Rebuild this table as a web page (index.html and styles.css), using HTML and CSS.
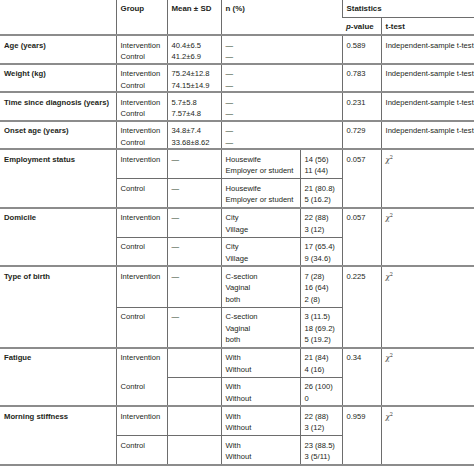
FILE: index.html
```html
<!DOCTYPE html>
<html>
<head>
<meta charset="utf-8">
<link rel="stylesheet" href="styles.css">
</head>
<body>
<div class="wrap">
<table class="tbl">
<colgroup>
<col class="c1"><col class="c2"><col class="c3"><col class="c4a"><col class="c4b"><col class="c5"><col class="c6">
</colgroup>
<thead>
<tr class="h1">
<th rowspan="2" class="first"></th>
<th rowspan="2">Group</th>
<th rowspan="2">Mean ± SD</th>
<th rowspan="2" colspan="2">n (%)</th>
<th colspan="2" class="stat">Statistics</th>
</tr>
<tr class="h2">
<th><i>p</i>-value</th>
<th>t-test</th>
</tr>
</thead>
<tbody>
<tr class="main">
<td class="lbl">Age (years)</td>
<td>Intervention<br>Control</td>
<td>40.4±6.5<br>41.2±6.9</td>
<td colspan="2">—<br>—</td>
<td>0.589</td>
<td>Independent-sample t-test</td>
</tr>
<tr class="main">
<td class="lbl">Weight (kg)</td>
<td>Intervention<br>Control</td>
<td>75.24±12.8<br>74.15±14.9</td>
<td colspan="2">—<br>—</td>
<td>0.783</td>
<td>Independent-sample t-test</td>
</tr>
<tr class="main">
<td class="lbl">Time since diagnosis (years)</td>
<td>Intervention<br>Control</td>
<td>5.7±5.8<br>7.57±4.8</td>
<td colspan="2">—<br>—</td>
<td>0.231</td>
<td>Independent-sample t-test</td>
</tr>
<tr class="main">
<td class="lbl">Onset age (years)</td>
<td>Intervention<br>Control</td>
<td>34.8±7.4<br>33.68±8.62</td>
<td colspan="2">—<br>—</td>
<td>0.729</td>
<td>Independent-sample t-test</td>
</tr>

<tr class="sub">
<td rowspan="2" class="lbl">Employment status</td>
<td>Intervention</td>
<td>—</td>
<td>Housewife<br>Employer or student</td>
<td>14 (56)<br>11 (44)</td>
<td rowspan="2">0.057</td>
<td rowspan="2"><span class="chi">χ<sup>2</sup></span></td>
</tr>
<tr class="main">
<td>Control</td>
<td>—</td>
<td>Housewife<br>Employer or student</td>
<td>21 (80.8)<br>5 (16.2)</td>
</tr>

<tr class="sub">
<td rowspan="2" class="lbl">Domicile</td>
<td>Intervention</td>
<td>—</td>
<td>City<br>Village</td>
<td>22 (88)<br>3 (12)</td>
<td rowspan="2">0.057</td>
<td rowspan="2"><span class="chi">χ<sup>2</sup></span></td>
</tr>
<tr class="main">
<td>Control</td>
<td>—</td>
<td>City<br>Village</td>
<td>17 (65.4)<br>9 (34.6)</td>
</tr>

<tr class="sub">
<td rowspan="2" class="lbl">Type of birth</td>
<td>Intervention</td>
<td>—</td>
<td>C-section<br>Vaginal<br>both</td>
<td>7 (28)<br>16 (64)<br>2 (8)</td>
<td rowspan="2">0.225</td>
<td rowspan="2"><span class="chi">χ<sup>2</sup></span></td>
</tr>
<tr class="main">
<td>Control</td>
<td>—</td>
<td>C-section<br>Vaginal<br>both</td>
<td>3 (11.5)<br>18 (69.2)<br>5 (19.2)</td>
</tr>

<tr class="sub">
<td rowspan="2" class="lbl">Fatigue</td>
<td class="nob">Intervention</td>
<td></td>
<td>With<br>Without</td>
<td>21 (84)<br>4 (16)</td>
<td rowspan="2">0.34</td>
<td rowspan="2"><span class="chi">χ<sup>2</sup></span></td>
</tr>
<tr class="main">
<td>Control</td>
<td></td>
<td>With<br>Without</td>
<td>26 (100)<br>0</td>
</tr>

<tr class="sub">
<td rowspan="2" class="lbl">Morning stiffness</td>
<td>Intervention</td>
<td></td>
<td>With<br>Without</td>
<td>22 (88)<br>3 (12)</td>
<td rowspan="2">0.959</td>
<td rowspan="2"><span class="chi">χ<sup>2</sup></span></td>
</tr>
<tr class="main last">
<td>Control</td>
<td></td>
<td>With<br>Without</td>
<td>23 (88.5)<br>3 (5/11)</td>
</tr>
</tbody>
</table>
</div>
</body>
</html>
```

FILE: styles.css
```css
html, body {
  margin: 0;
  padding: 0;
  background: #fff;
}
.wrap {
  width: 474px;
  height: 466px;
  overflow: hidden;
}
.tbl {
  border-collapse: collapse;
  table-layout: fixed;
  width: 474px;
  font-family: "Liberation Sans", Arial, sans-serif;
  font-size: 7.6px;
  line-height: 11.5px;
  color: #231f20;
}
.c1 { width: 116px; }
.c2 { width: 51px; }
.c3 { width: 54px; }
.c4a { width: 79px; }
.c4b { width: 42px; }
.c5 { width: 39px; }
.c6 { width: 93px; }

.tbl th, .tbl td {
  text-align: left;
  vertical-align: top;
  padding: 3.5px 2px 0 4px;
  border-left: 1px solid #6d6d6d;
  white-space: nowrap;
  overflow: hidden;
}
.tbl th:first-child, .tbl td.lbl, .tbl th.first {
  border-left: none;
}
.tbl th {
  font-weight: bold;
  font-size: 7.9px;
}
.h1 th {
  padding-top: 3px;
  padding-bottom: 1px;
  height: 12.5px;
}
.h2 th {
  padding-top: 3px;
  padding-bottom: 1px;
  height: 12.5px;
  border-top: 1px solid #6d6d6d;
}
.h1 th.stat {
  border-bottom: 1px solid #6d6d6d;
}
thead tr.h2 th {
  border-bottom: 2px solid #8c8c8c;
}
thead tr.h1 th[rowspan] {
  border-bottom: 2px solid #8c8c8c;
}
.tbl td.lbl {
  font-weight: bold;
  font-size: 7.7px;
}
tr.main td {
  border-bottom: 2px solid #8c8c8c;
}
tr.sub td {
  border-bottom: 1px solid #6d6d6d;
  padding-bottom: 1.5px;
}
tr.sub + tr.main td {
  padding-bottom: 1px;
}
tr.sub td[rowspan] {
  border-bottom: 2px solid #8c8c8c;
}
tr.sub td.nob {
  border-bottom: none;
}
.chi {
  font-style: italic;
  font-family: "DejaVu Serif", "Liberation Serif", serif;
  font-size: 7px;
}
.chi sup {
  font-size: 5px;
  line-height: 0;
  vertical-align: 3px;
  font-style: normal;
}
```
